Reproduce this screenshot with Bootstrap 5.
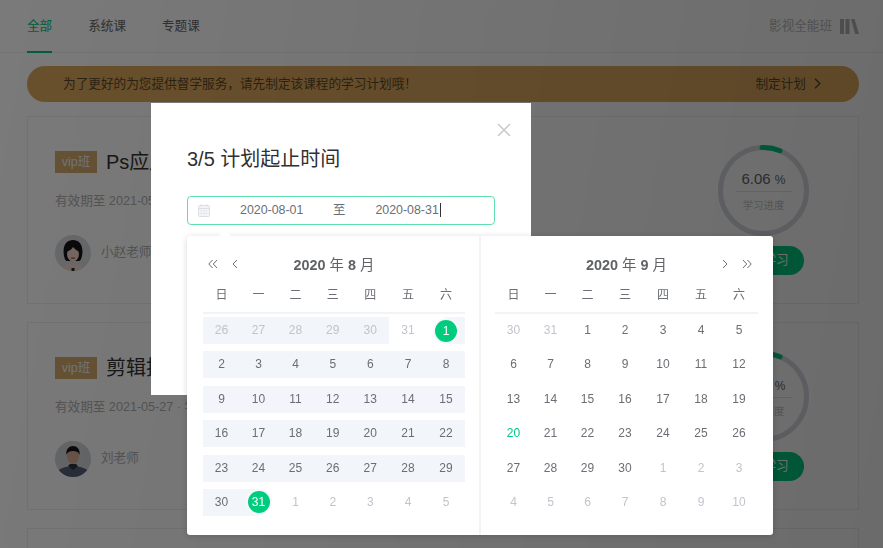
<!DOCTYPE html>
<html lang="zh-CN">
<head>
    <meta charset="UTF-8">
    <meta name="viewport" content="width=device-width, initial-scale=1.0">
    <title>我的课程</title>
    <link href="https://cdn.jsdelivr.net/npm/bootstrap@5.3.0/dist/css/bootstrap.min.css" rel="stylesheet">
    <style>
        html, body {
            height: 100%;
            overflow: hidden;
        }
        body {
            font-family: "Liberation Sans", "Noto Sans CJK SC", sans-serif;
            font-size: 13px;
            color: #303133;
            background: #fff;
        }
        .tab-bar {
            height: 53px;
            padding: 0 24px 0 27px;
            border-bottom: 1px solid #f0f0f0;
        }
        .tab-item {
            position: relative;
            line-height: 52px;
            margin-right: 36px;
            color: #666;
            text-decoration: none;
            font-size: 12.6px;
        }
        .tab-item.on { color: #00c47a; }
        .tab-item.on::after {
            content: "";
            position: absolute;
            left: 0;
            right: 0;
            bottom: -1px;
            height: 2px;
            background: #00c47a;
        }
        .class-name { color: #bbb; font-size: 12.6px; }
        .tip-bar {
            height: 36px;
            margin: 13px 24px 14px 27px;
            padding: 0 38px 0 36px;
            border-radius: 18px;
            background: #dca85f;
            color: #5c4826;
            font-size: 12.65px;
        }
        .course-box {
            height: 188px;
            margin: 0 24px 18px 27px;
            padding: 0 49px 0 27px;
            border: 1px solid #eeeeee;
        }
        .course-box .course-info { padding-top: 33px; }
        .vip-tag {
            width: 42px;
            height: 22px;
            line-height: 22px;
            margin-right: 9px;
            text-align: center;
            background: #d4aa6e;
            color: #f2f2f2;
            font-size: 12.5px;
        }
        .course-title { font-size: 20px; line-height: 24px; color: #333; }
        .expire-line { margin-top: 18px; font-size: 12.6px; color: #b0b0b0; }
        .teacher-line { margin-top: 24px; font-size: 12.6px; color: #b0b0b0; }
        .teacher-line svg { margin-right: 10px; }
        .course-side { width: 91px; padding-top: 28px; }
        .ring-box { position: relative; width: 91px; height: 91px; }
        .ring-label {
            position: absolute;
            inset: 0;
            text-align: center;
        }
        .ring-num {
            width: 56px;
            margin: 24px auto 0;
            padding-bottom: 1px;
            line-height: 20px;
            font-size: 15px;
            color: #666;
            border-bottom: 1px solid #e4e4e4;
        }
        .ring-num small { font-size: 12px; }
        .ring-sub { margin-top: 6px; font-size: 10.4px; color: #c4c4c4; }
        .study-btn {
            display: block;
            width: 81px;
            height: 29px;
            line-height: 29px;
            margin: 10px 0 0 5px;
            padding: 0;
            border: 0;
            border-radius: 15px;
            background: #00c97f;
            color: #fff;
            font-size: 12.6px;
            text-align: center;
        }
        .dim-layer {
            position: fixed;
            inset: 0;
            background: linear-gradient(100deg, rgba(0, 0, 0, .52), rgba(0, 0, 0, .58));
        }
        .plan-dialog {
            position: fixed;
            left: 151px;
            top: 103px;
            width: 380px;
            height: 292px;
            padding: 44px 36px 0;
            background: #fff;
        }
        .close-mark { position: absolute; right: 20px; top: 20px; }
        .plan-title { margin: 0; font-size: 20px; font-weight: 400; line-height: 24px; color: #303133; }
        .range-box {
            width: 308px;
            height: 29px;
            margin-top: 25px;
            padding-left: 10px;
            border: 1.5px solid #5fdfae;
            border-radius: 4px;
            font-size: 12.4px;
            color: #6b6e75;
        }
        .range-from { margin-left: 30px; width: 93px; }
        .range-to { margin-left: 30px; }
        .caret-mark {
            display: inline-block;
            width: 1px;
            height: 14px;
            margin-left: 1px;
            vertical-align: -3px;
            background: #303133;
        }
        .date-popup {
            position: absolute;
            left: 36px;
            top: 133px;
            width: 586px;
            height: 299px;
            background: #fff;
            border-radius: 3px;
            box-shadow: 0 1px 6px rgba(0, 0, 0, .16);
            color: #6b6e75;
        }
        .date-popup::before {
            content: "";
            position: absolute;
            left: 32px;
            top: -6px;
            border: 6px solid transparent;
            border-top: 0;
            border-bottom-color: #fff;
        }
        .month-pane { width: 292px; padding: 0 14px 0 16px; }
        .month-pane + .month-pane {
            width: 294px;
            padding: 0 15px 0 14px;
            border-left: 2px solid #f2f3f5;
        }
        .month-head {
            position: relative;
            height: 58px;
            padding-top: 21px;
            line-height: 17px;
            text-align: center;
            font-size: 14.4px;
            font-weight: 700;
            color: #606266;
        }
        .month-head span { font-weight: 400; }
        .month-head svg { position: absolute; top: 23px; }
        .week-row, .day-row {
            display: grid;
            grid-template-columns: 37px 37px 37px 37.5px 37.5px 38px 38px;
            text-align: center;
        }
        .month-pane + .month-pane .week-row,
        .month-pane + .month-pane .day-row {
            grid-template-columns: 37px 37px 37px 38px 38px 38px 38px;
        }
        .week-row {
            height: 20px;
            margin-bottom: 3px;
            font-size: 12px;
            line-height: 2px;
            border-bottom: 2px solid #f2f3f5;
        }
        .day-row {
            height: 27px;
            margin-bottom: 7.4px;
            line-height: 27px;
            font-size: 12px;
        }
        .day-cell { position: relative; }
        .day-cell.off { color: #c0c4cc; }
        .day-cell.now { color: #00c97f; }
        .day-cell.mid { background: #f2f5fa; }
        .day-cell.from { background: linear-gradient(90deg, transparent 50%, #f2f5fa 50%); }
        .day-cell.to { background: linear-gradient(90deg, #f2f5fa 50%, transparent 50%); }
        .day-cell b {
            display: block;
            width: 22px;
            height: 22px;
            margin: 2.5px auto 0;
            line-height: 22px;
            border-radius: 50%;
            background: #00cc7d;
            color: #fff;
            font-weight: 400;
            box-shadow: 0 0 0 2px #f5f8fd;
        }
    </style>
</head>
<body>
    <!-- 课程列表 -->
    <div class="tab-bar d-flex align-items-center">
        <a class="tab-item on" href="#">全部</a>
        <a class="tab-item" href="#">系统课</a>
        <a class="tab-item" href="#">专题课</a>
        <span class="class-name ms-auto">影视全能班</span>
        <svg class="ms-2" width="19" height="15" viewBox="0 0 19 15"><path fill="#b5b5b5" d="M0 0h4v15H0zM5.500 0h4v15h-4zM11 0h3.500L19 15h-3.800z"/></svg>
    </div>

    <div class="tip-bar d-flex align-items-center justify-content-between">
        <span>为了更好的为您提供督学服务，请先制定该课程的学习计划哦！</span>
        <span class="d-flex align-items-center gap-2">制定计划
            <svg width="7" height="11" viewBox="0 0 7 11"><path fill="none" stroke="#5c4826" stroke-width="1.400" d="M1 .8l4.800 4.700L1 10.200"/></svg>
        </span>
    </div>

    <div class="course-box d-flex justify-content-between">
        <div class="course-info">
            <div class="d-flex align-items-center">
                <span class="vip-tag">vip班</span>
                <span class="course-title">Ps应用技巧</span>
            </div>
            <div class="expire-line">有效期至 2021-05-27 · 学习中</div>
            <div class="teacher-line d-flex align-items-center">
                <svg width="36" height="36" viewBox="0 0 36 36">
                    <defs>
                        <filter id="softPhoto"><feGaussianBlur stdDeviation=".5"/></filter>
                        <clipPath id="womanClip"><circle cx="18" cy="18" r="18"/></clipPath>
                    </defs>
                    <g clip-path="url(#womanClip)">
                        <rect width="36" height="36" fill="#d9dbdf"/>
                        <g filter="url(#softPhoto)">
                            <path fill="#f0d9cf" d="M5 38c1-7 6-9 13-9s12 2 13 9z"/>
                            <path fill="#141214" d="M9 21C7 10 12 5 18 5s11 5 9 16c-.500 3-2 5-3 5H12c-1 0-2.500-2-3-5z"/>
                            <ellipse cx="18" cy="19" rx="6" ry="7.500" fill="#f4d8cc"/>
                            <path fill="#141214" d="M11 17c3-1 6-3 7-5 2 2 4 4 7 5l-1-7H12z"/>
                            <path fill="#c8393c" d="M16 22.500h4v1.200h-4z"/>
                            <path fill="#2a2527" d="M16.500 33h3v3h-3z"/>
                        </g>
                    </g>
                </svg>
                小赵老师
            </div>
        </div>
        <div class="course-side">
            <div class="ring-box">
                <svg width="91" height="91" viewBox="0 0 91 91">
                    <circle cx="45.500" cy="45.500" r="43" fill="none" stroke="#d8dae0" stroke-width="5"/>
                    <path d="M44 2.600A43 43 0 0 1 62 5.800" fill="none" stroke="#00c97f" stroke-width="5" stroke-linecap="round"/>
                </svg>
                <div class="ring-label">
                    <div class="ring-num">6.06 <small>%</small></div>
                    <div class="ring-sub">学习进度</div>
                </div>
            </div>
            <button class="study-btn">继续学习</button>
        </div>
    </div>

    <div class="course-box d-flex justify-content-between">
        <div class="course-info">
            <div class="d-flex align-items-center">
                <span class="vip-tag">vip班</span>
                <span class="course-title">剪辑技巧</span>
            </div>
            <div class="expire-line">有效期至 2021-05-27 · 学习中</div>
            <div class="teacher-line d-flex align-items-center">
                <svg width="36" height="36" viewBox="0 0 36 36">
                    <clipPath id="manClip"><circle cx="18" cy="18" r="18"/></clipPath>
                    <g clip-path="url(#manClip)">
                        <rect width="36" height="36" fill="#d2d4d8"/>
                        <g filter="url(#softPhoto)">
                            <path fill="#56607a" d="M0 38c0-10 7-12 18-13 11 1 18 3 18 13z"/>
                            <path fill="#2c3040" d="M13 25l5 4 5-4-2-2h-6z"/>
                            <ellipse cx="18" cy="15.500" rx="6" ry="7.500" fill="#d8ae98"/>
                            <path fill="#16161a" d="M11.500 14c-1-6 3-9 6.500-9s7.500 3 6.500 9c-1-3-3-4-6.500-4s-5.500 1-6.500 4z"/>
                        </g>
                    </g>
                </svg>
                刘老师
            </div>
        </div>
        <div class="course-side">
            <div class="ring-box">
                <svg width="91" height="91" viewBox="0 0 91 91">
                    <circle cx="45.500" cy="45.500" r="43" fill="none" stroke="#d8dae0" stroke-width="5"/>
                    <path d="M44 2.600A43 43 0 0 1 62 5.800" fill="none" stroke="#00c97f" stroke-width="5" stroke-linecap="round"/>
                </svg>
                <div class="ring-label">
                    <div class="ring-num">6.06 <small>%</small></div>
                    <div class="ring-sub">学习进度</div>
                </div>
            </div>
            <button class="study-btn">继续学习</button>
        </div>
    </div>

    <div class="course-box"></div>

    <div class="dim-layer"></div>

    <!-- 计划弹窗 -->
    <div class="plan-dialog">
        <svg class="close-mark" width="14" height="14" viewBox="0 0 14 14"><path stroke="#c9c9c9" stroke-width="1.500" d="M1 1l12 12M13 1L1 13"/></svg>
        <h5 class="plan-title">3/5 计划起止时间</h5>
        <div class="range-box d-flex align-items-center">
            <svg width="12" height="13" viewBox="0 0 12 13">
                <rect x=".5" y="1.500" width="11" height="11" rx="1" fill="#f4f4f6" stroke="#dcdfe6"/>
                <path stroke="#dcdfe6" d="M0 4.500h12M3 0v2.500M9 0v2.500"/>
                <path stroke="#dcdfe6" stroke-dasharray="1.500 1" d="M2.500 7h7M2.500 9.500h7"/>
            </svg>
            <span class="range-from">2020-08-01</span>
            <span>至</span>
            <span class="range-to">2020-08-31<i class="caret-mark"></i></span>
        </div>

        <div class="date-popup d-flex">
            <div class="month-pane">
                <div class="month-head">
                    <svg style="left:5px" width="10" height="10" viewBox="0 0 10 10"><path fill="none" stroke="#6b6e75" d="M4.500 1L.8 5l3.700 4M9 1L5.300 5 9 9"/></svg>
                    <svg style="left:29px" width="6" height="10" viewBox="0 0 6 10"><path fill="none" stroke="#6b6e75" d="M5 1L1 5l4 4"/></svg>
                    2020 <span>年</span> 8 <span>月</span>
                </div>
                <div class="week-row"><span>日</span><span>一</span><span>二</span><span>三</span><span>四</span><span>五</span><span>六</span></div>
                <div id="month-left"></div>
            </div>
            <div class="month-pane">
                <div class="month-head">
                    <svg style="right:30px" width="6" height="10" viewBox="0 0 6 10"><path fill="none" stroke="#6b6e75" d="M1 1l4 4-4 4"/></svg>
                    <svg style="right:6px" width="10" height="10" viewBox="0 0 10 10"><path fill="none" stroke="#6b6e75" d="M1 1l3.700 4L1 9M5.500 1l3.700 4-3.700 4"/></svg>
                    2020 <span>年</span> 9 <span>月</span>
                </div>
                <div class="week-row"><span>日</span><span>一</span><span>二</span><span>三</span><span>四</span><span>五</span><span>六</span></div>
                <div id="month-right"></div>
            </div>
        </div>
    </div>

<script>
    // 画一个月的日期，prevDays 为上月露出的日期，days 为本月天数
    function drawMonth(id, prevDays, days, getCell) {
        let html = '';
        let cells = [];
        prevDays.forEach(d => cells.push({ d: d, off: true }));
        for (let i = 1; i <= days; i++) cells.push({ d: i, off: false });
        let next = 1;
        while (cells.length < 42) cells.push({ d: next++, off: true, after: true });

        for (let r = 0; r < 6; r++) {
            html += '<div class="day-row">';
            cells.slice(r * 7, r * 7 + 7).forEach(c => {
                html += getCell(c);
            });
            html += '</div>';
        }
        document.getElementById(id).innerHTML = html;
    }

    drawMonth('month-left', [26, 27, 28, 29, 30, 31], 31, c => {
        if (c.off && !c.after && c.d <= 30) return `<div class="day-cell off mid">${c.d}</div>`;
        if (c.off) return `<div class="day-cell off">${c.d}</div>`;
        if (c.d === 1) return `<div class="day-cell from"><b>1</b></div>`;
        if (c.d === 31) return `<div class="day-cell to"><b>31</b></div>`;
        return `<div class="day-cell mid">${c.d}</div>`;
    });

    drawMonth('month-right', [30, 31], 30, c => {
        if (c.off) return `<div class="day-cell off">${c.d}</div>`;
        if (c.d === 20) return `<div class="day-cell now">${c.d}</div>`;
        return `<div class="day-cell">${c.d}</div>`;
    });
</script>
<script src="https://cdn.jsdelivr.net/npm/bootstrap@5.3.0/dist/js/bootstrap.bundle.min.js"></script>
</body>
</html>
